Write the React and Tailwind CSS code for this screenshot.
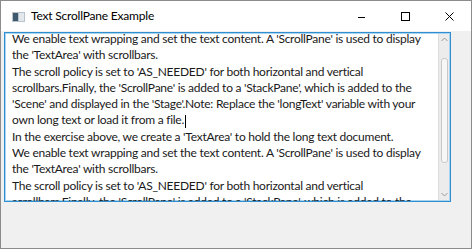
import React from 'react';

const lines = [
  "We enable text wrapping and set the text content. A 'ScrollPane' is used to display",
  "the 'TextArea' with scrollbars.",
  "The scroll policy is set to 'AS_NEEDED' for both horizontal and vertical",
  "scrollbars.Finally, the 'ScrollPane' is added to a 'StackPane', which is added to the",
  "'Scene' and displayed in the 'Stage'.Note: Replace the 'longText' variable with your",
  "own long text or load it from a file.",
  "In the exercise above, we create a 'TextArea' to hold the long text document.",
  "We enable text wrapping and set the text content. A 'ScrollPane' is used to display",
  "the 'TextArea' with scrollbars.",
  "The scroll policy is set to 'AS_NEEDED' for both horizontal and vertical",
  "scrollbars.Finally, the 'ScrollPane' is added to a 'StackPane', which is added to the",
];

const AppIcon = () => (
  <svg width="13" height="10" viewBox="0 0 13 10">
    <rect x="0" y="0" width="13" height="10" fill="#b9c3cc" />
    <rect x="1" y="1" width="5" height="8" fill="#3f5a6e" />
    <rect x="7" y="1" width="5" height="8" fill="#e3e8ec" />
  </svg>
);

export default function App() {
  return (
    <div className="w-[474px] h-[251px] bg-white" style={{ fontFamily: 'Lato, "Open Sans", sans-serif' }}>
      <div className="w-[472px] h-[249px] border border-[#8c8c8c] flex flex-col bg-[#f0f0f0]">
        {/* Title bar */}
        <div className="h-[30px] bg-white flex items-center shrink-0">
          <div className="ml-[11px] mt-[1px]"><AppIcon /></div>
          <span className="ml-[6px] text-[12px] tracking-[-0.2px] text-black">Text ScrollPane Example</span>
          <div className="ml-auto flex items-center h-full">
            <div className="w-[44px] flex justify-center mt-[2px]">
              <div className="w-[7px] h-px bg-black" />
            </div>
            <div className="w-[44px] flex justify-center">
              <div className="w-[9px] h-[9px] border border-black" />
            </div>
            <div className="w-[44px] flex justify-center">
              <svg width="9" height="9" viewBox="0 0 9 9">
                <path d="M0.5 0.5 L8.5 8.5 M8.5 0.5 L0.5 8.5" stroke="#000" strokeWidth="1" />
              </svg>
            </div>
          </div>
        </div>

        {/* Text area */}
        <div className="ml-[3px] mt-px w-[447px] h-[170px] border border-[#2f8fd0] bg-white flex overflow-hidden shadow-[inset_0_0_0_1px_#a9d4ef]">
          <div className="flex-1 pl-[7px] overflow-hidden">
            <div className="-mt-[2px] text-[12px] leading-[16.3px] tracking-[-0.25px] text-[#1a1a1a]">
              {lines.map((l, i) => (
                <div key={i} className="whitespace-nowrap">
                  {l}
                  {i === 5 && <span className="inline-block w-px h-[13px] bg-black align-middle ml-px" />}
                </div>
              ))}
            </div>
          </div>
          {/* Scrollbar */}
          <div className="w-[11px] mr-[1px] my-px bg-[#ececec] border-l border-[#dcdcdc] flex flex-col items-center">
            <svg width="7" height="5" viewBox="0 0 7 5" className="mt-[3px]">
              <path d="M0.5 4 L3.5 1 L6.5 4" stroke="#9a9a9a" fill="none" />
            </svg>
            <div className="mt-[16px] w-[7px] h-[105px] rounded-[3px] bg-[#f7f7f7] border border-[#c8c8c8]" />
            <svg width="7" height="5" viewBox="0 0 7 5" className="mt-auto mb-[3px]">
              <path d="M0.5 1 L3.5 4 L6.5 1" stroke="#9a9a9a" fill="none" />
            </svg>
          </div>
        </div>
      </div>
    </div>
  );
}
